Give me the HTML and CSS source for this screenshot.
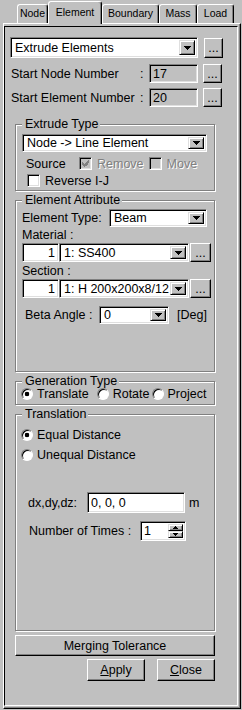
FILE: index.html
```html
<!DOCTYPE html>
<html lang="en">
<head>
  <title>Extrude Elements</title>
  <meta charset="utf-8">
  <link rel="stylesheet" href="styles.css">
</head>
<body>
  <div class="tabs">
    <div class="tab tab-node">Node</div>
    <div class="tab tab-element active">Element</div>
    <div class="tab tab-boundary">Boundary</div>
    <div class="tab tab-mass">Mass</div>
    <div class="tab tab-load">Load</div>
  </div>

  <div class="panel">
    <div class="frame">
      <div class="mode">
        <div class="combo mode-combo">
          <span class="combo-text">Extrude Elements</span>
          <span class="arrow"><svg width="7" height="4"><path d="M0 0h7v1H0zM1 1h5v1H1zM2 2h3v1H2zM3 3h1v1H3z"/></svg></span>
        </div>
        <button class="btn btn-more mode-more">...</button>
      </div>

      <div class="start start-node">
        <span class="start-label">Start Node Number</span>
        <span class="colon">:</span>
        <span class="field dis">17</span>
        <button class="btn btn-more">...</button>
      </div>
      <div class="start start-element">
        <span class="start-label">Start Element Number</span>
        <span class="colon">:</span>
        <span class="field dis">20</span>
        <button class="btn btn-more">...</button>
      </div>

      <div class="group extrude">
        <div class="group-title">Extrude Type</div>
        <div class="combo extrude-combo">
          <span class="combo-text">Node -&gt; Line Element</span>
          <span class="arrow"><svg width="7" height="4"><path d="M0 0h7v1H0zM1 1h5v1H1zM2 2h3v1H2zM3 3h1v1H3z"/></svg></span>
        </div>
        <div class="source">
          <span class="source-label">Source</span>
          <span class="check dis"><svg width="7" height="7"><path fill="#808080" d="M6 0h1v3H6zM5 1h1v4H5zM4 2h1v4H4zM0 2h1v3H0zM1 3h1v3H1zM2 4h1v3H2zM3 3h1v3H3z"/></svg></span>
          <span class="disabled remove">Remove</span>
          <span class="check dis move-check"></span>
          <span class="disabled move">Move</span>
        </div>
        <label class="reverse">
          <span class="check"></span>
          <span>Reverse I-J</span>
        </label>
      </div>

      <div class="group attr">
        <div class="group-title">Element Attribute</div>
        <div class="type-row">
          <span class="type-label">Element Type:</span>
          <div class="combo type-combo">
            <span class="combo-text">Beam</span>
            <span class="arrow"><svg width="7" height="4"><path d="M0 0h7v1H0zM1 1h5v1H1zM2 2h3v1H2zM3 3h1v1H3z"/></svg></span>
          </div>
        </div>
        <div class="attr-label material-label">Material :</div>
        <div class="prop-row">
          <span class="field num">1</span>
          <div class="combo prop-combo">
            <span class="combo-text">1: SS400</span>
            <span class="arrow"><svg width="7" height="4"><path d="M0 0h7v1H0zM1 1h5v1H1zM2 2h3v1H2zM3 3h1v1H3z"/></svg></span>
          </div>
          <button class="btn btn-more prop-more">...</button>
        </div>
        <div class="attr-label section-label">Section :</div>
        <div class="prop-row">
          <span class="field num">1</span>
          <div class="combo prop-combo">
            <span class="combo-text">1: H 200x200x8/12</span>
            <span class="arrow"><svg width="7" height="4"><path d="M0 0h7v1H0zM1 1h5v1H1zM2 2h3v1H2zM3 3h1v1H3z"/></svg></span>
          </div>
          <button class="btn btn-more prop-more">...</button>
        </div>
        <div class="beta-row">
          <span class="beta-label">Beta Angle :</span>
          <div class="combo beta-combo">
            <span class="combo-text">0</span>
            <span class="arrow"><svg width="7" height="4"><path d="M0 0h7v1H0zM1 1h5v1H1zM2 2h3v1H2zM3 3h1v1H3z"/></svg></span>
          </div>
          <span class="deg">[Deg]</span>
        </div>
      </div>

      <div class="group gen">
        <div class="group-title">Generation Type</div>
        <div class="radio-row gen-row">
          <label class="option"><span class="radio on"></span>Translate</label>
          <label class="option rotate"><span class="radio"></span>Rotate</label>
          <label class="option project"><span class="radio"></span>Project</label>
        </div>
      </div>

      <div class="group trans">
        <div class="group-title">Translation</div>
        <label class="radio-row equal"><span class="radio on"></span>Equal Distance</label>
        <label class="radio-row unequal"><span class="radio"></span>Unequal Distance</label>
        <div class="dx-row">
          <span class="dx-label">dx,dy,dz:</span>
          <span class="field dx-field">0, 0, 0</span>
          <span class="unit">m</span>
        </div>
        <div class="times-row">
          <span class="times-label">Number of Times :</span>
          <div class="field spin">
            <span>1</span>
            <span class="spin-btns">
              <span class="spin-btn"><svg width="5" height="3"><path d="M2 0h1v1H2zM1 1h3v1H1zM0 2h5v1H0z"/></svg></span>
              <span class="spin-btn"><svg width="5" height="3"><path d="M0 0h5v1H0zM1 1h3v1H1zM2 2h1v1H2z"/></svg></span>
            </span>
          </div>
        </div>
      </div>

      <button class="btn merge">Merging Tolerance</button>
      <div class="actions">
        <button class="btn action"><u>A</u>pply</button>
        <button class="btn action"><u>C</u>lose</button>
      </div>
    </div>
  </div>
</body>
</html>
```

FILE: styles.css
```css
*, *::before, *::after {
  margin: 0;
  box-sizing: border-box;
}

body {
  width: 242px;
  height: 710px;
  overflow: hidden;
  background-color: #C0C0C0;
  color: #000000;
  font-family: "Liberation Sans", Arial, sans-serif;
  font-size: 12.5px;
  line-height: 14px;
}

/* tabs */

.tabs {
  display: flex;
  align-items: flex-end;
  height: 23px;
  padding-left: 17px;
  font-size: 10.5px;
}

.tab {
  height: 19px;
  border: 1px solid;
  border-bottom: 0;
  border-color: #FFFFFF #000000 #000000 #FFFFFF;
  border-radius: 3px 3px 0 0;
  box-shadow: inset -1px 0 #808080;
  text-align: center;
  line-height: 17px;
}

.tab-node { width: 31px; }
.tab-element { width: 54px; }
.tab-boundary { width: 57px; }
.tab-mass { width: 38px; }
.tab-load { width: 37px; }

.tab.active {
  position: relative;
  height: 23px;
  margin-bottom: -1px;
  background-color: #C0C0C0;
  line-height: 21px;
}

/* panel */

.panel {
  margin-left: 3px;
  width: 238px;
  height: 686px;
  padding: 2px 2px 2px 0;
  border: 1px solid;
  border-color: #FFFFFF #000000 #000000 #FFFFFF;
  box-shadow: inset -1px -1px #808080;
}

.frame {
  height: 100%;
  border: 1px solid;
  border-color: #000000 #FFFFFF #FFFFFF #000000;
}

/* controls */

.combo, .field {
  display: flex;
  align-items: center;
  flex-shrink: 0;
  padding: 2px;
  border: 1px solid;
  border-color: #808080 #FFFFFF #FFFFFF #808080;
  box-shadow: inset 1px 1px #000000, inset -1px -1px #DFDFDF;
  background-color: #FFFFFF;
  white-space: nowrap;
}

.field {
  padding-left: 3px;
}

.field.dis {
  background-color: #C0C0C0;
}

.combo {
  align-items: stretch;
}

.combo-text {
  flex: 1;
  align-self: center;
  padding-left: 2px;
  overflow: hidden;
}

.arrow, .spin-btn, .btn {
  border: 1px solid;
  border-color: #DFDFDF #000000 #000000 #DFDFDF;
  box-shadow: inset 1px 1px #FFFFFF, inset -1px -1px #808080;
  background-color: #C0C0C0;
}

.arrow {
  display: flex;
  align-items: center;
  justify-content: center;
  width: 16px;
}

.btn {
  flex-shrink: 0;
  padding: 0;
  border-color: #FFFFFF #000000 #000000 #FFFFFF;
  box-shadow: inset -1px -1px #808080;
  color: #000000;
  font-family: inherit;
  font-size: inherit;
  line-height: 14px;
}

.btn-more {
  width: 19px;
  height: 19px;
}

.check {
  display: flex;
  align-items: center;
  justify-content: center;
  flex-shrink: 0;
  width: 13px;
  height: 13px;
  border: 1px solid;
  border-color: #808080 #FFFFFF #FFFFFF #808080;
  box-shadow: inset 1px 1px #000000, inset -1px -1px #DFDFDF;
  background-color: #FFFFFF;
}

.check.dis {
  background-color: #C0C0C0;
}

.radio {
  flex-shrink: 0;
  width: 12px;
  height: 12px;
  border: 1px solid;
  border-color: #808080 #FFFFFF #FFFFFF #808080;
  border-radius: 50%;
  box-shadow: inset 1px 1px #000000;
  background-color: #FFFFFF;
}

.radio.on {
  background: radial-gradient(circle, #000000 2px, #FFFFFF 2.6px);
}

.disabled {
  color: #808080;
  text-shadow: 1px 1px #FFFFFF;
}

/* top rows */

.mode {
  display: flex;
  align-items: center;
  gap: 6px;
  margin: 10px 0 0 5px;
}

.mode-combo {
  width: 188px;
  height: 21px;
}

.mode-more {
  height: 20px;
}

.start {
  display: flex;
  align-items: center;
  height: 19px;
  padding-left: 6px;
}

.start-node { margin-top: 6px; }
.start-element { margin-top: 5px; }

.start-label { width: 129px; }
.colon { width: 9px; }

.start .field {
  width: 49px;
  height: 19px;
}

.start .btn-more {
  margin-left: 5px;
}

/* group boxes */

.group {
  width: 200px;
  margin-left: 10px;
  padding: 0 6px;
  border: 1px solid #808080;
  box-shadow: 1px 1px 0 #FFFFFF, inset 1px 1px 0 #FFFFFF;
}

.group-title {
  width: fit-content;
  margin: -7px 0 -4px;
  padding: 0 2px 0 3px;
  background-color: #C0C0C0;
  line-height: 13px;
}

.extrude {
  margin-top: 17px;
  padding-bottom: 3px;
}

.extrude-combo {
  width: 185px;
  height: 18px;
  margin-top: 7px;
}

.source, .reverse {
  display: flex;
  align-items: center;
  height: 13px;
}

.source {
  margin-top: 5px;
}

.source-label {
  width: 57px;
  padding-left: 4px;
}

.remove { margin-left: 5px; }
.move-check { margin-left: 5px; }
.move { margin-left: 5px; }

.reverse {
  gap: 5px;
  margin-top: 4px;
  padding-left: 5px;
}

.attr {
  margin-top: 9px;
  padding-bottom: 47px;
}

.type-row {
  display: flex;
  align-items: center;
  margin-top: 6px;
}

.type-label { width: 87px; }

.type-combo {
  width: 98px;
  height: 18px;
}

.material-label { margin-top: 1px; }
.section-label { margin-top: 2px; }

.prop-row {
  display: flex;
  height: 19px;
  margin-top: 1px;
}

.num {
  justify-content: flex-end;
  width: 37px;
  padding-right: 3px;
}

.prop-combo { width: 130px; }

.prop-more {
  width: 21px;
  height: 19px;
  margin-left: 1px;
}

.beta-row {
  display: flex;
  align-items: center;
  height: 18px;
  margin-top: 8px;
  padding-left: 3px;
}

.beta-label { width: 74px; }

.beta-combo {
  width: 70px;
  height: 18px;
}

.deg { margin-left: 8px; }

.gen {
  margin-top: 9px;
  padding-bottom: 4px;
}

.radio-row {
  display: flex;
  align-items: center;
  height: 12px;
}

.gen-row {
  margin: 4px 0 0 -1px;
}

.option {
  display: flex;
  align-items: center;
  gap: 4px;
}

.rotate { margin-left: 8px; }
.project { margin-left: 2px; }

.trans {
  margin-top: 9px;
  padding-bottom: 89px;
}

.equal, .unequal {
  gap: 4px;
  margin-left: -1px;
}

.equal { margin-top: 12px; }
.unequal { margin-top: 8px; }

.dx-row, .times-row {
  display: flex;
  align-items: center;
}

.dx-row {
  margin-top: 31px;
  padding-left: 6px;
}

.dx-label { width: 59px; }

.dx-field {
  width: 98px;
  height: 21px;
}

.unit { margin-left: 4px; }

.times-row {
  margin-top: 8px;
  padding-left: 7px;
}

.times-label { width: 111px; }

.spin {
  width: 46px;
  height: 20px;
}

.spin-btns {
  display: flex;
  flex-direction: column;
  align-self: stretch;
  width: 15px;
  margin-left: auto;
}

.spin-btn {
  display: flex;
  align-items: center;
  justify-content: center;
  flex: 1;
}

.merge {
  display: block;
  width: 200px;
  height: 21px;
  margin: 4px 0 0 10px;
}

.actions {
  display: flex;
  justify-content: flex-end;
  gap: 12px;
  width: 200px;
  margin: 3px 0 0 10px;
}

.action {
  width: 58px;
  height: 22px;
}
```
